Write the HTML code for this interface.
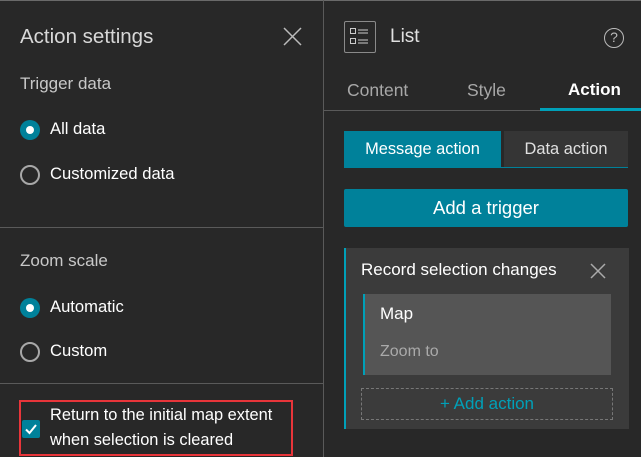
<!DOCTYPE html>
<html><head><style>
*{margin:0;padding:0;box-sizing:border-box}
body{width:641px;height:457px;background:#282828;font-family:"Liberation Sans",sans-serif;position:relative;overflow:hidden;color:#e6e6e6}
.a{position:absolute;white-space:nowrap}
.radio{position:absolute;width:20px;height:20px;border-radius:50%;border:2px solid #a8a8a8}
.radio.on{border:none;background:#00819a}
.radio.on::after{content:"";position:absolute;left:6px;top:6px;width:8px;height:8px;border-radius:50%;background:#fff}
</style></head><body>
<div class="a" style="left:0;top:0;width:641px;height:1px;background:#6a6a6a"></div>
<div class="a" style="left:323px;top:0;width:1px;height:457px;background:#5a5a5a"></div>
<div class="a" style="left:20px;top:25px;font-size:20.5px;color:#d8d8d8">Action settings</div>
<svg class="a" style="left:283px;top:27px" width="19" height="19"><path d="M1 1L18 18M18 1L1 18" stroke="#bbb" stroke-width="1.5"/></svg>
<div class="a" style="left:20px;top:74px;font-size:17px;color:#c8c8c8">Trigger data</div>
<div class="radio on" style="left:20px;top:120px"></div>
<div class="a" style="left:50px;top:119px;font-size:16.6px;color:#fff">All data</div>
<div class="radio" style="left:20px;top:165px"></div>
<div class="a" style="left:50px;top:164px;font-size:16.6px;color:#fff">Customized data</div>
<div class="a" style="left:0;top:227px;width:323px;height:1px;background:#5a5a5a"></div>
<div class="a" style="left:20px;top:251px;font-size:17px;color:#c8c8c8">Zoom scale</div>
<div class="radio on" style="left:20px;top:298px"></div>
<div class="a" style="left:50px;top:297px;font-size:16.6px;color:#fff">Automatic</div>
<div class="radio" style="left:20px;top:342px"></div>
<div class="a" style="left:50px;top:341px;font-size:16.6px;color:#fff">Custom</div>
<div class="a" style="left:0;top:383px;width:323px;height:1px;background:#5a5a5a"></div>
<div class="a" style="left:19px;top:400px;width:274px;height:56px;border:2px solid #e8353a"></div>
<div class="a" style="left:22px;top:420px;width:18px;height:18px;background:#00819a;border-radius:2px"></div>
<svg class="a" style="left:22px;top:420px" width="18" height="18"><path d="M4 9.5L7.5 13L14 5" stroke="#fff" stroke-width="2" fill="none"/></svg>
<div class="a" style="left:50px;top:403px;font-size:16.4px;line-height:25px;color:#fff">Return to the initial map extent<br>when selection is cleared</div>

<div class="a" style="left:344px;top:21px;width:32px;height:32px;border:1px solid #8a8a8a;border-radius:2px"></div>
<svg class="a" style="left:349px;top:26px" width="22" height="22"><rect x="1.5" y="2.5" width="5" height="5" fill="none" stroke="#ccc"/><rect x="1.5" y="12.5" width="5" height="5" fill="none" stroke="#ccc"/><path d="M9 4h10M9 7h10M9 14h10M9 17h10" stroke="#ccc"/></svg>
<div class="a" style="left:390px;top:26px;font-size:19px;color:#e0e0e0">List</div>
<div class="a" style="left:604px;top:28px;width:20px;height:20px;border:1.5px solid #bbb;border-radius:50%;font-size:14px;text-align:center;line-height:17px;color:#bbb">?</div>
<div class="a" style="left:347px;top:80px;font-size:17.5px;color:#a8a8a8">Content</div>
<div class="a" style="left:467px;top:80px;font-size:17.5px;color:#a8a8a8">Style</div>
<div class="a" style="left:568px;top:80px;font-size:17px;color:#fff;font-weight:bold">Action</div>
<div class="a" style="left:324px;top:110px;width:317px;height:1px;background:#5a5a5a"></div>
<div class="a" style="left:540px;top:108px;width:101px;height:3px;background:#00a0b8"></div>

<div class="a" style="left:344px;top:131px;width:157px;height:37px;background:#00819a;color:#fff;font-size:16.4px;text-align:center;line-height:36px">Message action</div>
<div class="a" style="left:504px;top:131px;width:124px;height:37px;background:#353535;color:#e0e0e0;font-size:16.4px;text-align:center;line-height:36px">Data action</div>
<div class="a" style="left:344px;top:167px;width:284px;height:1px;background:#00819a"></div>
<div class="a" style="left:344px;top:189px;width:284px;height:38px;background:#00819a;border-radius:2px;color:#fff;font-size:18.5px;text-align:center;line-height:38px">Add a trigger</div>

<div class="a" style="left:344px;top:248px;width:285px;height:181px;background:#3b3b3b;border-left:2px solid #00a0b8"></div>
<div class="a" style="left:361px;top:260px;font-size:17px;color:#fff">Record selection changes</div>
<svg class="a" style="left:590px;top:263px" width="16" height="16"><path d="M1 1L15 15M15 1L1 15" stroke="#aaa" stroke-width="1.5"/></svg>
<div class="a" style="left:363px;top:294px;width:248px;height:81px;background:#555;border-left:2px solid #00a0b8"></div>
<div class="a" style="left:380px;top:304px;font-size:17px;color:#fff">Map</div>
<div class="a" style="left:380px;top:343px;font-size:16px;color:#aaa">Zoom to</div>
<div class="a" style="left:361px;top:388px;width:252px;height:32px;border:1px dashed #777;color:#00a0b8;font-size:17px;text-align:center;line-height:30px">+ Add action</div>
</body></html>
